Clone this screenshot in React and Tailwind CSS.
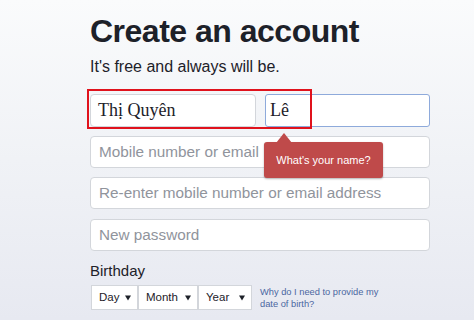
import React from "react";

const sans = { fontFamily: '"Liberation Sans", Arial, sans-serif' };

function Caret() {
  return (
    <svg width="6" height="6" viewBox="0 0 6 6" className="shrink-0">
      <path d="M0 0.5 H6 L3 5.5 Z" fill="#1d2129" />
    </svg>
  );
}

function Select({ label, w }) {
  return (
    <div className={`flex items-center justify-between h-[25px] ${w} bg-white border border-[#d3d6db] pl-[7px] pr-[6px] text-[11.5px] text-[#1d2129]`}>
      <span>{label}</span>
      <Caret />
    </div>
  );
}

export default function App() {
  return (
    <div
      className="relative w-[474px] h-[320px] overflow-hidden bg-gradient-to-b from-[#fafbfc] via-[#f0f2f6] to-[#e7e9f1] font-['Liberation_Sans',Arial,sans-serif]"
      style={sans}
    >
      <div className="flex flex-col pl-[90px] pt-[13px] w-[430px]">
        <h1 className="text-[32px] leading-[36px] font-bold text-[#1d2129] tracking-[-0.5px]">
          Create an account
        </h1>
        <p className="mt-[8px] text-[16px] leading-[20px] text-[#1d2129]">
          It's free and always will be.
        </p>

        <div className="mt-[17px] flex gap-[9px]">
          <div className="flex items-center w-[166px] h-[33px] bg-white border border-[#d3d6db] rounded-[4px] pl-[7px] text-[18px] text-[#1d2129] font-['Liberation_Serif',serif]">
            Thị Quyên
          </div>
          <div className="flex items-center flex-1 h-[33px] bg-white border border-[#8eaadb] rounded-[3px] pl-[4px] text-[18px] text-[#1d2129] font-['Liberation_Serif',serif]">
            Lê
          </div>
        </div>

        <div className="mt-[9px] flex items-center h-[32px] bg-white border border-[#d3d6db] rounded-[4px] pl-[8px] text-[15.3px] text-[#90949c]">
          Mobile number or email
        </div>
        <div className="mt-[9px] flex items-center h-[32px] bg-white border border-[#d3d6db] rounded-[4px] pl-[8px] text-[15.3px] text-[#90949c]">
          Re-enter mobile number or email address
        </div>
        <div className="mt-[10px] flex items-center h-[32px] bg-white border border-[#d3d6db] rounded-[4px] pl-[8px] text-[15.3px] text-[#90949c]">
          New password
        </div>

        <div className="mt-[10px] text-[15px] leading-[20px] text-[#1d2129]">Birthday</div>
        <div className="mt-[4px] flex items-center">
          <div className="flex pl-[1px]">
            <Select label="Day" w="w-[47px]" />
            <Select label="Month" w="w-[60px]" />
            <Select label="Year" w="w-[54px]" />
          </div>
          <div className="ml-[8px] text-[9.3px] leading-[12px] text-[#4b67a1]">
            Why do I need to provide my
            <br />
            date of birth?
          </div>
        </div>
      </div>

      {/* red annotation box */}
      <div className="absolute left-[87px] top-[89px] w-[225px] h-[40px] border-2 border-[#e0121c]" />

      {/* tooltip */}
      <div className="absolute left-[264px] top-[133px] w-[119px]">
        <svg width="16" height="10" viewBox="0 0 16 10" className="ml-[12px] block">
          <path d="M0 10 L8 0 L16 10 Z" fill="#bf4a4a" />
        </svg>
        <div className="flex items-center justify-center h-[36px] -mt-px bg-[#bf4a4a] rounded-[3px] shadow-[0_1px_2px_rgba(0,0,0,0.3)] text-[11px] text-white">
          What's your name?
        </div>
      </div>
    </div>
  );
}
